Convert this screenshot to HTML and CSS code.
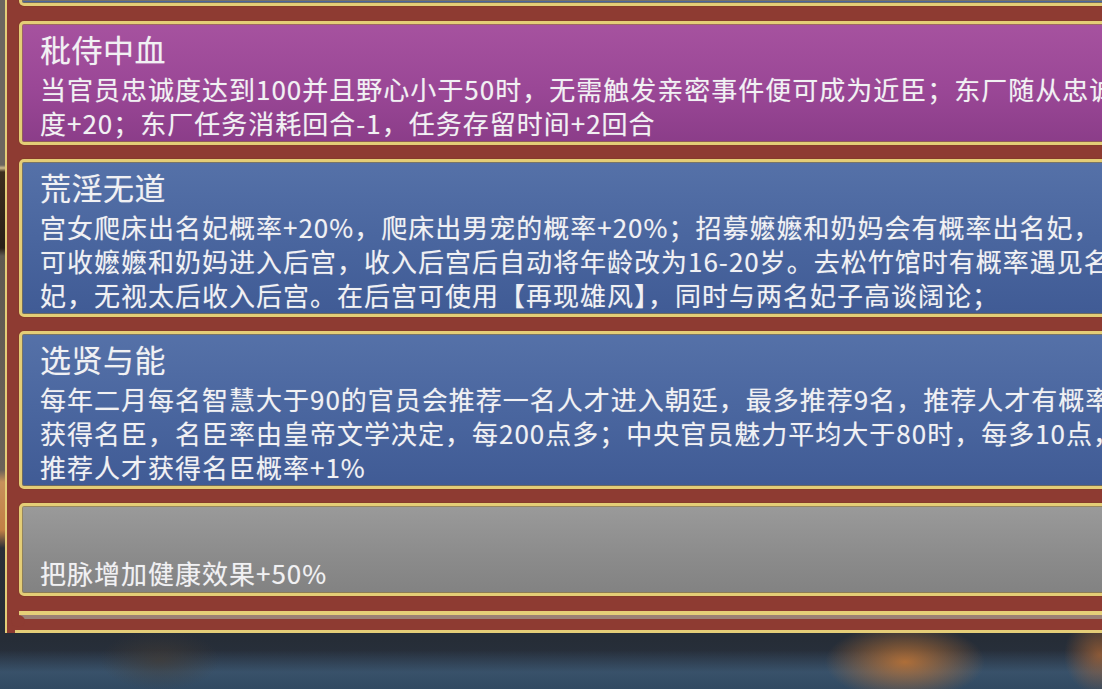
FILE: index.html
```html
<!DOCTYPE html>
<html lang="zh-CN">
<head>
<meta charset="utf-8">
<title>特性列表</title>
<link rel="stylesheet" href="styles.css">
</head>
<body>
<div class="frame">
  <div class="list">
    <div class="card blue stub"></div>

    <div class="card purple">
      <div class="title">秕侍中血</div>
      <div class="desc">
        <div class="line">当官员忠诚度达到100并且野心小于50时，无需触发亲密事件便可成为近臣；东厂随从忠诚</div>
        <div class="line">度+20；东厂任务消耗回合-1，任务存留时间+2回合</div>
      </div>
    </div>

    <div class="card blue">
      <div class="title">荒淫无道</div>
      <div class="desc">
        <div class="line">宫女爬床出名妃概率+20%，爬床出男宠的概率+20%；招募嬷嬷和奶妈会有概率出名妃，</div>
        <div class="line">可收嬷嬷和奶妈进入后宫，收入后宫后自动将年龄改为16-20岁。去松竹馆时有概率遇见名</div>
        <div class="line">妃，无视太后收入后宫。在后宫可使用【再现雄风】，同时与两名妃子高谈阔论；</div>
      </div>
    </div>

    <div class="card blue">
      <div class="title">选贤与能</div>
      <div class="desc">
        <div class="line">每年二月每名智慧大于90的官员会推荐一名人才进入朝廷，最多推荐9名，推荐人才有概率</div>
        <div class="line">获得名臣，名臣率由皇帝文学决定，每200点多；中央官员魅力平均大于80时，每多10点，</div>
        <div class="line">推荐人才获得名臣概率+1%</div>
      </div>
    </div>

    <div class="card gray">
      <div class="title"></div>
      <div class="desc">
        <div class="line">把脉增加健康效果+50%</div>
      </div>
    </div>
  </div>
  <div class="frame-bottom">
    <div class="strip"></div>
    <div class="band"></div>
  </div>
  <div class="corner"></div>
</div>
</body>
</html>
```

FILE: styles.css
```css
html, body {
  margin: 0;
  padding: 0;
  width: 1102px;
  height: 689px;
  overflow: hidden;
}

body {
  font-family: "Noto Sans CJK SC", "Noto Sans", sans-serif;
  background:
    radial-gradient(ellipse 80px 38px at 905px 662px, rgba(196, 118, 52, 0.85), rgba(196, 118, 52, 0) 100%),
    radial-gradient(ellipse 36px 40px at 1100px 655px, rgba(180, 104, 50, 0.7), rgba(180, 104, 50, 0) 100%),
    radial-gradient(ellipse 60px 30px at 160px 660px, rgba(70, 60, 50, 0.6), rgba(70, 60, 50, 0) 100%),
    linear-gradient(to bottom, rgba(0,0,0,0) 650px, rgba(62, 92, 120, 0.75) 672px, rgba(52, 82, 110, 0.7) 689px),
    linear-gradient(to bottom,
      #6c665f 0px, #6c665f 165px, #cdb98c 168px, #3e2e1e 172px, #2a2018 248px,
      #5f5951 256px, #6a6259 470px, #c7915a 482px, #c27f45 530px,
      #2b3038 548px, #262d37 640px, #2a3444 689px);
}

.frame {
  position: relative;
  width: 1320px;
  margin-left: 5px;
  border-left: 2px solid #e4cd78;
  background: #8e3b32;
  padding-left: 12px;
}

.list {
  display: flex;
  flex-direction: column;
  gap: 14px;
}

.card {
  border: 3px solid #e4cd76;
  border-radius: 5px;
  box-shadow: inset 0 0 0 1px rgba(150, 120, 50, 0.55), 0 0 0 1px rgba(120, 60, 30, 0.35);
  padding: 7px 0 2px 18px;
  color: #f1f1f3;
}

.card.stub {
  height: 3px;
  padding: 0;
  border-top: 0;
  border-radius: 0 0 0 5px;
  margin-bottom: 1px;
}

.purple {
  background: linear-gradient(to bottom, #a6529f 0%, #9a4796 55%, #8b3d89 100%);
}

.blue {
  background: linear-gradient(to bottom, #5571a8 0%, #4a669f 50%, #405b95 100%);
}

.gray {
  background: linear-gradient(to bottom, #9a9a9a 0%, #8c8c8c 55%, #828282 100%);
  padding-bottom: 3px;
}

.gray .desc {
  margin-top: 7px;
}

.title {
  height: 36px;
  font-size: 31px;
  line-height: 36px;
  letter-spacing: 0.5px;
  white-space: nowrap;
  text-shadow: 0 0 1px rgba(255,255,255,0.4);
}

.desc {
  margin-top: 5px;
}

.line {
  font-size: 26px;
  line-height: 34px;
  height: 34px;
  letter-spacing: 1px;
  white-space: nowrap;
  text-shadow: 0 0 1px rgba(255,255,255,0.35);
}

.frame-bottom {
  margin-left: -2px;
  padding-top: 15px;
}

.strip {
  height: 4px;
  background: #e6cf78;
  border-bottom: 4px solid #9c8076;
  margin-left: 2px;
}

.band {
  height: 11px;
  background: #8e3b32;
  border-bottom: 3px solid #e4cd78;
  margin-left: -2px;
}

.corner {
  position: absolute;
  left: 4px;
  bottom: 6px;
  width: 14px;
  height: 12px;
  border-radius: 50%;
  background: #8e3b32;
}
```
